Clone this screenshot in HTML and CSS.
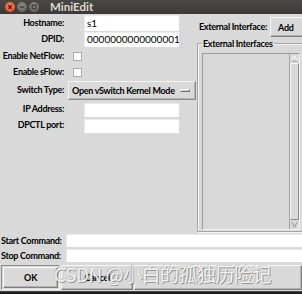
FILE: index.html
```html
<!DOCTYPE html>
<html>
<head>
<meta charset="utf-8">
<link rel="stylesheet" href="styles.css">
</head>
<body>
<div class="window">
  <div class="titlebar">
    <span class="wbtn close"><svg width="10" height="10" viewBox="0 0 10 10"><path d="M3.3 3.3 L6.7 6.7 M6.7 3.3 L3.3 6.7" stroke="#5a1c0a" stroke-width="1.3"/></svg></span>
    <span class="wbtn"><svg width="10" height="10" viewBox="0 0 10 10"><path d="M3 5 H7" stroke="#3a3935" stroke-width="1.3"/></svg></span>
    <span class="wbtn"><svg width="10" height="10" viewBox="0 0 10 10"><rect x="3.2" y="3.2" width="3.6" height="3.6" fill="none" stroke="#3a3935" stroke-width="1.1"/></svg></span>
    <span class="title">MiniEdit</span>
  </div>

  <div class="main">
    <div class="form">
      <div class="lbl">Hostname:</div>
      <div class="cell"><div class="entry e1">s1</div></div>
      <div class="lbl">DPID:</div>
      <div class="cell"><div class="entry e2">0000000000000001</div></div>
      <div class="lbl">Enable NetFlow:</div>
      <div class="cell"><div class="check"></div></div>
      <div class="lbl">Enable sFlow:</div>
      <div class="cell"><div class="check"></div></div>
      <div class="lbl">Switch Type:</div>
      <div class="cell"><div class="optmenu"><span>Open vSwitch Kernel Mode</span><span class="ind"></span></div></div>
      <div class="lbl">IP Address:</div>
      <div class="cell"><div class="entry e3"></div></div>
      <div class="lbl">DPCTL port:</div>
      <div class="cell"><div class="entry e4"></div></div>
    </div>

    <div class="right">
      <div class="extrow">
        <span class="extlbl">External Interface:</span>
        <div class="btn add">Add</div>
      </div>
      <fieldset class="frame">
        <legend>External Interfaces</legend>
        <div class="listbox">
          <div class="listarea"></div>
          <div class="scrollbar">
            <div class="arrow"><svg width="7" height="7" viewBox="0 0 7 7"><path d="M3.5 0.8 L6.3 6.2 H0.7 Z" fill="none" stroke="#ffffff" stroke-width="0.9"/><path d="M6.3 6.2 H0.7" stroke="#8a8a8a" stroke-width="0.9"/></svg></div>
            <div class="slider"></div>
            <div class="arrow"><svg width="7" height="7" viewBox="0 0 7 7"><path d="M3.5 6.2 L6.3 0.8 H0.7 Z" fill="none" stroke="#8a8a8a" stroke-width="0.9"/><path d="M0.7 0.8 H6.3" stroke="#ffffff" stroke-width="0.9"/></svg></div>
          </div>
        </div>
      </fieldset>
    </div>
  </div>

  <div class="cmds">
    <div class="lbl">Start Command:</div>
    <div class="cell"><div class="entry wide"></div></div>
    <div class="lbl">Stop Command:</div>
    <div class="cell"><div class="entry wide"></div></div>
  </div>

  <div class="buttons">
    <div class="defring"><div class="btn okbtn">OK</div></div>
    <div class="btn cancel">Cancel</div>
    <div class="btn rest"></div>
  </div>
  <div class="bottomedge"></div>

  <div class="watermark">CSDN @小白的孤独历险记</div>
</div>
</body>
</html>
```

FILE: styles.css
```css
html, body {
  margin: 0;
  padding: 0;
}
body {
  width: 302px;
  height: 294px;
  overflow: hidden;
  background: #d9d9d9;
  font-family: Lato, "Liberation Sans", "Noto Sans CJK SC", sans-serif;
  color: #000;
}
.window {
  position: relative;
  width: 302px;
  height: 294px;
  overflow: hidden;
  display: flex;
  flex-direction: column;
}

/* title bar */
.titlebar {
  height: 14px;
  flex: none;
  background: linear-gradient(#4a4844, #3b3a36);
  display: flex;
  align-items: center;
  padding-left: 5px;
  gap: 2px;
}
.wbtn {
  width: 10px;
  height: 10px;
  border-radius: 50%;
  background: radial-gradient(circle at 50% 35%, #8a8883, #5e5d58);
  display: flex;
}
.wbtn.close {
  background: radial-gradient(circle at 50% 35%, #f7825a, #e0461c);
}
.title {
  margin-left: 9px;
  font-weight: bold;
  font-size: 11.5px;
  color: #dfdbd2;
  line-height: 14px;
}

/* main area */
.main {
  height: 219px;
  flex: none;
  display: flex;
}
.form {
  width: 197px;
  flex: none;
  display: grid;
  grid-template-columns: 66px 1fr;
  grid-template-rows: 17px 16px 17px 16px 20px 17px 16px;
  align-items: center;
  align-content: start;
}
.lbl {
  text-align: right;
  padding-right: 2px;
  font-weight: bold;
  font-size: 9px;
  letter-spacing: -0.3px;
  white-space: nowrap;
  line-height: 12px;
}
.cell {
  display: flex;
  align-items: center;
  height: 100%;
}
.entry {
  box-sizing: border-box;
  background: #ffffff;
  border-top: 1px solid #ececec;
  border-left: 1px solid #ececec;
  font-size: 10px;
  line-height: 13px;
  padding-left: 2px;
  white-space: nowrap;
  overflow: hidden;
  margin-left: 18px;
  width: 95px;
  height: 15px;
}
.e1 { margin-top: 1px; height: 16px; line-height: 14px; }
.e2 { margin-top: 1px; }
.e3 { margin-top: 3px; height: 14px; }
.e4 { margin-top: 1px; height: 14px; }
.check {
  margin-left: 7px;
  width: 9px;
  height: 9px;
  box-sizing: border-box;
  background: #ffffff;
  border: 1px solid #a9a9a9;
  margin-top: 1px;
}
.optmenu {
  margin-left: 2px;
  width: 128px;
  height: 19px;
  box-sizing: border-box;
  border-top: 1px solid #f4f4f4;
  border-left: 1px solid #f4f4f4;
  border-right: 1px solid #8a8a8a;
  border-bottom: 1px solid #8a8a8a;
  box-shadow: inset -1px -1px 0 #b5b5b5;
  display: flex;
  align-items: center;
  justify-content: space-between;
  padding: 0 5px 0 3px;
  font-weight: bold;
  font-size: 9px;
  letter-spacing: -0.3px;
  white-space: nowrap;
}
.ind {
  width: 10px;
  height: 3px;
  box-sizing: border-box;
  border-top: 1px solid #f4f4f4;
  border-left: 1px solid #f4f4f4;
  border-right: 1px solid #6f6f6f;
  border-bottom: 1px solid #6f6f6f;
  background: #d0d0d0;
}

/* right column */
.right {
  flex: 1;
  display: flex;
  flex-direction: column;
}
.extrow {
  height: 24px;
  flex: none;
  display: flex;
  align-items: flex-start;
}
.extlbl {
  margin-left: 2px;
  margin-top: 7px;
  font-weight: bold;
  font-size: 9px;
  letter-spacing: -0.3px;
  white-space: nowrap;
  line-height: 12px;
}
.btn {
  box-sizing: border-box;
  border-top: 1px solid #f6f6f6;
  border-left: 1px solid #f6f6f6;
  border-right: 1px solid #7e7e7e;
  border-bottom: 1px solid #7e7e7e;
  box-shadow: inset -1px -1px 0 #b3b3b3;
  display: flex;
  align-items: center;
  justify-content: center;
  font-weight: bold;
  font-size: 9px;
  letter-spacing: -0.2px;
  white-space: nowrap;
}
.add {
  margin-left: 3px;
  margin-top: 3px;
  width: 36px;
  height: 20px;
  flex: none;
  justify-content: flex-start;
  padding-left: 7px;
}
.frame {
  margin: 0;
  padding: 0 0 1px 4px;
  min-width: 0;
  width: 120px;
  box-sizing: border-box;
  height: 194px;
  border: 1px solid #a6a6a6;
  box-shadow: inset 1px 1px 0 #f3f3f3, 1px 1px 0 #f3f3f3;
}
.frame legend {
  padding: 0 1px;
  font-weight: bold;
  font-size: 9px;
  letter-spacing: -0.3px;
  line-height: 11px;
  white-space: nowrap;
}
.listbox {
  margin-top: 4px;
  width: 98px;
  height: 177px;
  box-sizing: border-box;
  border-top: 1px solid #9a9a9a;
  border-left: 1px solid #9a9a9a;
  border-bottom: 1px solid #f4f4f4;
  border-right: 1px solid #f4f4f4;
  display: flex;
}
.listarea {
  flex: 1;
}
.scrollbar {
  width: 9px;
  flex: none;
  display: flex;
  flex-direction: column;
  background: #c9c9c9;
  border-left: 1px solid #a3a3a3;
}
.arrow {
  height: 9px;
  flex: none;
  display: flex;
  align-items: center;
  justify-content: center;
  background: #d9d9d9;
}
.slider {
  flex: 1;
  box-sizing: border-box;
  background: #d9d9d9;
  border-top: 1px solid #f4f4f4;
  border-left: 1px solid #f4f4f4;
  border-right: 1px solid #8a8a8a;
  border-bottom: 1px solid #8a8a8a;
}

/* commands */
.cmds {
  flex: none;
  display: grid;
  grid-template-columns: 66px 1fr;
  grid-template-rows: 15px 15px;
  align-items: center;
}
.cmds .lbl {
  text-align: left;
  padding-left: 1px;
  padding-right: 0;
}
.entry.wide {
  margin-left: 0;
  width: 240px;
  height: 13px;
  line-height: 11px;
}

/* buttons */
.buttons {
  flex: none;
  height: 28px;
  display: flex;
  align-items: flex-start;
  padding-top: 2px;
  box-sizing: border-box;
}
.defring {
  margin-left: 1px;
  width: 60px;
  height: 25px;
  box-sizing: border-box;
  border-top: 1px solid #8c8c8c;
  border-left: 1px solid #8c8c8c;
  border-right: 1px solid #f4f4f4;
  border-bottom: 1px solid #f4f4f4;
  padding: 1px;
  display: flex;
}
.okbtn {
  flex: 1;
}
.cancel {
  margin-left: 1px;
  width: 73px;
  height: 25px;
}
.rest {
  margin-left: 1px;
  width: 170px;
  height: 25px;
}
.bottomedge {
  flex: none;
  height: 3px;
  background: #1d1d1d;
  border-top: 1px solid #4a4a4a;
}

/* watermark overlay */
.watermark {
  position: absolute;
  left: 54px;
  top: 261px;
  font-family: "Noto Sans CJK SC", "Noto Sans", sans-serif;
  font-size: 19px;
  line-height: 26px;
  color: rgba(250, 250, 250, 0.9);
  text-shadow: 1px 1px 0 rgba(90, 90, 90, 0.55), -1px -1px 0 rgba(150, 150, 150, 0.35);
  white-space: nowrap;
  letter-spacing: -0.5px;
}
```
